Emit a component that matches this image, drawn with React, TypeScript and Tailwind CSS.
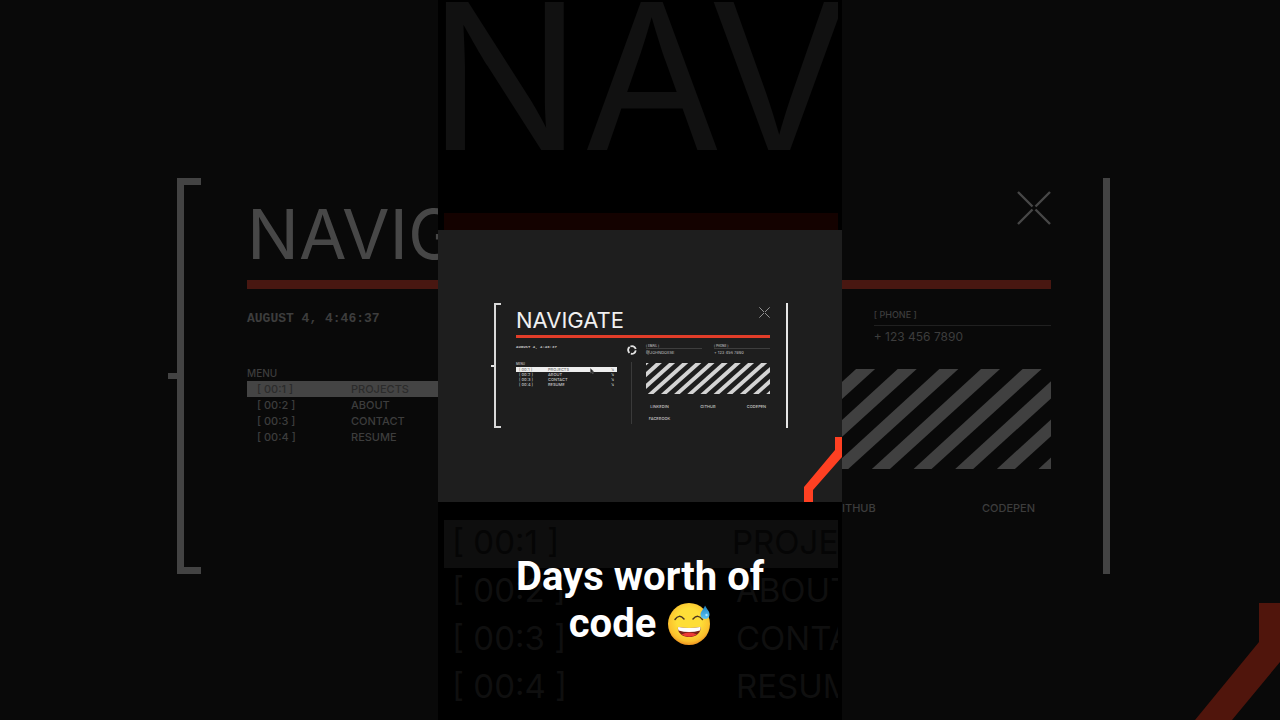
import clsx from "clsx";

const menu = [
    { id: "[ 00:1 ]", label: "PROJECTS" },
    { id: "[ 00:2 ]", label: "ABOUT" },
    { id: "[ 00:3 ]", label: "CONTACT" },
    { id: "[ 00:4 ]", label: "RESUME" },
];

const contacts = [
    { label: "[ EMAIL ]", value: "@JOHNDOESE" },
    { label: "[ PHONE ]", value: "+ 123 456 7890" },
];

const socials = ["LINKEDIN", "GITHUB", "CODEPEN", "FACEBOOK"];

// Every class that changes between the big dimmed panel and the small bright one
const sizes = {
    lg: {
        panel: "h-[396px] text-[#3d3d3d]",
        bracket: "w-6 border-y-[7px] border-l-[7px] border-[#434343]",
        tick: "-left-4 h-[6px] w-[9px] bg-[#434343]",
        bar: "w-[7px] bg-[#434343]",
        content: "ml-[46px] mr-[52px] pt-[21px]",
        title: "text-[69px] leading-[70px] text-[#474747]",
        close: "-mt-2 size-[34px] text-[#474747]",
        rule: "mt-[11px] h-[9px] bg-[#481711]",
        date: "mt-5 text-[13px] leading-5",
        menuTitle: "mt-[38px] text-[10px] leading-3",
        list: "mt-[2px]",
        row: "h-4 pl-[10px] pr-3 text-[11px] leading-4",
        active: "bg-[#444444] text-[#2b2b2b]",
        id: "w-[94px]",
        spinner: "mt-6 size-8",
        divider: "mt-6 w-px bg-[#1c1c1c]",
        contacts: "mt-5 gap-[38px]",
        contactLabel: "pb-1 text-[9px] leading-3 border-[#202020]",
        contactValue: "mt-[5px] text-[12px] leading-3",
        hatch: "mt-[26px] h-[100px] text-[#404040]",
        socials: "mt-[33px] grid-cols-[85px_1fr_85px] gap-y-6 text-[11px] leading-3",
    },
    sm: {
        panel: "h-[125px] text-[#c4c4c4]",
        bracket: "w-[7px] border-y-2 border-l-2 border-[#d8d8d8]",
        tick: "-left-[5px] h-[2px] w-[3px] bg-[#e4e4e4]",
        bar: "w-[2px] bg-[#e6e6e6]",
        content: "ml-[15px] mr-4 pt-[6px]",
        title: "text-[22px] leading-[22px] text-[#f0f0f0]",
        close: "-mt-[2px] size-[11px] text-[#b5b5b5]",
        rule: "mt-1 h-[3px] bg-[#e23d29]",
        date: "mt-[7px] text-[4px] leading-[5px]",
        menuTitle: "mt-3 text-[3px] leading-1",
        list: "mt-px",
        row: "h-[5px] pl-[3px] pr-[3px] text-[4px] leading-[5px]",
        active: "bg-[#eeeeee] text-[#777777]",
        id: "w-[29px]",
        spinner: "mt-[7px] size-[10px] text-[#e4e4e4]",
        divider: "mt-[7px] w-px bg-[#3a3a3a]",
        contacts: "mt-[6px] gap-3",
        contactLabel: "text-[3px] leading-1 border-[#3e3e3e]",
        contactValue: "mt-[2px] text-[4px] leading-1",
        hatch: "mt-2 h-[31px] text-[#d4d4d4]",
        socials: "mt-[11px] grid-cols-[27px_1fr_27px] gap-y-2 text-[4px] leading-1",
    },
};

function Hatch({ className }: { className: string }) {
    return (
        <svg viewBox="0 0 392 100" preserveAspectRatio="none" className={clsx("block w-full", className)}>
            {Array.from({ length: 13 }, (_, i) => {
                const x = 380 - i * 41.6;
                return (
                    <polygon
                        key={i}
                        fill="currentColor"
                        points={`${x},100 ${x + 18},100 ${x + 128},0 ${x + 109},0`}
                    />
                );
            })}
        </svg>
    );
}

function CloseIcon() {
    return (
        <svg viewBox="0 0 34 34" className="size-full" stroke="currentColor" strokeWidth="2.4">
            <path d="M1 1 15.5 15.5M18.5 18.5 33 33M33 1 18.5 15.5M15.5 18.5 1 33" />
        </svg>
    );
}

function Spinner({ className }: { className: string }) {
    return (
        <svg viewBox="0 0 20 20" className={className} fill="none" stroke="currentColor" strokeWidth="3.6">
            <circle cx="10" cy="10" r="7.6" strokeDasharray="12.9 3" transform="rotate(-115 10 10)" />
        </svg>
    );
}

function Cursor() {
    return (
        <svg viewBox="0 0 12 18" className="absolute left-[74px] top-px z-10 h-[6px] w-1">
            <path d="M1 1v14l4-3 2 5 3-1-2-5h4z" fill="#222" stroke="#999" />
        </svg>
    );
}

function NavigatePanel({ size }: { size: "lg" | "sm" }) {
    const s = sizes[size];

    return (
        <div className={clsx("flex w-full font-['Inter',sans-serif]", s.panel)}>
            <div className={clsx("relative flex shrink-0 items-center", s.bracket)}>
                <span className={clsx("absolute", s.tick)} />
            </div>

            <div className={clsx("flex min-w-0 flex-1 flex-col", s.content)}>
                <div className="flex items-start justify-between">
                    <h2 className={s.title}>NAVIGATE</h2>
                    <button type="button" aria-label="Close" className={s.close}>
                        <CloseIcon />
                    </button>
                </div>
                <div className={s.rule} />

                <div className="grid min-h-0 flex-1 grid-cols-[101fr_29fr_124fr]">
                    <div className="min-w-0">
                        <p className={clsx("whitespace-nowrap font-['Liberation_Mono',monospace] font-bold", s.date)}>
                            AUGUST 4, 4:46:37
                        </p>
                        <p className={clsx("font-medium", s.menuTitle)}>MENU</p>
                        <nav className={clsx("relative", s.list)}>
                            {menu.map((item, i) => (
                                <a
                                    key={item.id}
                                    href="#"
                                    className={clsx("flex whitespace-nowrap font-medium", s.row, i === 0 && s.active)}
                                >
                                    <span className={s.id}>{item.id}</span>
                                    <span className="flex-1">{item.label}</span>
                                    <span>↘</span>
                                </a>
                            ))}
                            {size === "sm" && <Cursor />}
                        </nav>
                    </div>

                    <div className="flex flex-col items-center">
                        <Spinner className={clsx("shrink-0", s.spinner)} />
                        <div className={clsx("mb-1 flex-1", s.divider)} />
                    </div>

                    <div className="min-w-0">
                        <div className={clsx("grid grid-cols-2", s.contacts)}>
                            {contacts.map((c) => (
                                <div key={c.label} className="min-w-0 whitespace-nowrap">
                                    <p className={clsx("border-b font-medium", s.contactLabel)}>{c.label}</p>
                                    <p className={s.contactValue}>{c.value}</p>
                                </div>
                            ))}
                        </div>
                        <Hatch className={s.hatch} />
                        <div className={clsx("grid justify-items-center font-medium", s.socials)}>
                            {socials.map((name) => (
                                <a key={name} href="#">
                                    {name}
                                </a>
                            ))}
                        </div>
                    </div>
                </div>
            </div>

            <div className={clsx("shrink-0", s.bar)} />
        </div>
    );
}

function SweatSmile() {
    return (
        <svg viewBox="0 0 44 44" role="img" aria-label="Grinning face with sweat" className="size-11">
            <defs>
                <radialGradient id="face" cx="0.5" cy="0.42" r="0.58">
                    <stop offset="0.5" stopColor="#fede38" />
                    <stop offset="0.85" stopColor="#fbc02d" />
                    <stop offset="1" stopColor="#ee9320" />
                </radialGradient>
                <linearGradient id="drop" x1="0" y1="0" x2="0" y2="1">
                    <stop offset="0" stopColor="#1d7fc0" />
                    <stop offset="1" stopColor="#5cc5f5" />
                </linearGradient>
            </defs>
            <circle cx="22" cy="22" r="21" fill="url(#face)" />
            <path
                d="M8 17.5Q12 11.5 17 17M26 17Q31 11.5 35.5 17.5"
                fill="none"
                stroke="#4a3420"
                strokeWidth="1.5"
                strokeLinecap="round"
            />
            <path d="M11.5 25Q22 27 33 25Q34 25 33.5 27.5C31.5 37.5 13 37.5 11 27.5Q10.5 25 11.5 25Z" fill="#7a2018" />
            <path d="M14.500 32.5Q22 28.5 30 32.5Q22 37 14.500 32.5Z" fill="#ec3b36" />
            <path d="M11.5 25Q22 27 33 25Q34 25 33 28.500Q22 31.500 11.500 28.500Q10.5 25 11.5 25Z" fill="#fff" />
            <path d="M38 3.5C40.5 8 43 10 42.5 13C42 18.500 33.500 18 33.500 12.500C33.500 9.500 37 7 38 3.5Z" fill="url(#drop)" />
            <circle cx="39.5" cy="13" r="1.2" fill="#a9e4ff" />
        </svg>
    );
}

function ZoomedTop() {
    return (
        <div className="min-h-0 overflow-hidden pl-[6px] pr-1">
            <div className="overflow-hidden">
                <p className="-ml-4 whitespace-nowrap font-['Inter',sans-serif] text-[204px] leading-[151px] text-[#111111]">
                    NAVIGATE
                </p>
            </div>
            <div className="mt-[62px] h-7 bg-[#140200]" />
        </div>
    );
}

function ZoomedMenu() {
    return (
        <div className="min-h-0 overflow-hidden pl-[6px] pr-1 pt-[18px] font-['Inter',sans-serif] text-[33px] leading-[44px]">
            {menu.map((item, i) => (
                <div
                    key={item.id}
                    className={clsx(
                        "flex h-12 overflow-hidden whitespace-nowrap pl-2",
                        i === 0 ? "bg-[#0e0e0e] text-[#050505]" : "text-[#0f0f0f]"
                    )}
                >
                    <span className={clsx("shrink-0", i === 0 ? "w-[280px]" : "w-[284px]")}>{item.id}</span>
                    <span>{item.label}</span>
                </div>
            ))}
        </div>
    );
}

export default function App() {
    return (
        <main className="relative h-screen overflow-hidden bg-[#090909]">
            <div className="px-[170px] pt-[178px]">
                <div className="pl-[7px]">
                    <NavigatePanel size="lg" />
                </div>
            </div>
            <svg viewBox="0 0 85 117" className="absolute bottom-0 right-0 h-[117px] w-[85px]">
                <polygon points="64,0 85,0 85,59 37,117 0,117 64,39" fill="#50150c" />
            </svg>

            <div className="absolute inset-y-0 left-1/2 grid aspect-[101/180] -translate-x-1/2 grid-cols-1 grid-rows-[115fr_136fr_109fr] overflow-hidden bg-black">
                <ZoomedTop />

                <section className="relative min-h-0 bg-[#1e1e1e] pl-14 pr-[54px] pt-[73px]">
                    <NavigatePanel size="sm" />
                    <svg viewBox="0 0 38 65" className="absolute bottom-0 right-0 h-[65px] w-[38px]">
                        <polygon points="31,0 38,0 38,20 9,53 9,65 0,65 0,50 31,13" fill="#ff4022" />
                    </svg>
                </section>

                <ZoomedMenu />

                <h1 className="absolute inset-x-0 top-[553px] text-center font-['Roboto',sans-serif] text-[40px] font-bold leading-[47px] text-white">
                    Days worth of
                    <span className="flex items-center justify-center gap-[11px]">
                        code <SweatSmile />
                    </span>
                </h1>
            </div>
        </main>
    );
}
